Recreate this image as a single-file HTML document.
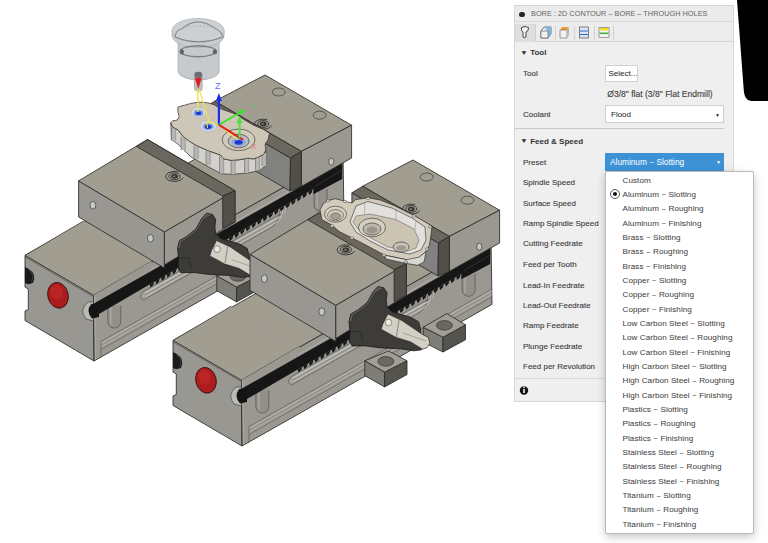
<!DOCTYPE html>
<html><head><meta charset="utf-8"><style>
*{margin:0;padding:0;box-sizing:border-box}
html,body{width:768px;height:543px;overflow:hidden;background:#fff;font-family:"Liberation Sans",sans-serif}
.abs{position:absolute}
.panel{position:absolute;left:514px;top:5px;width:220px;height:397px;background:#efefef;border:1px solid #d6d6d6}
.hdr{position:absolute;left:0;top:0;width:218px;height:16px;background:#ebebeb;border-bottom:1px solid #d9d9d9}
.dot{position:absolute;left:4px;top:6px;width:6px;height:5px;border-radius:3px;background:#222}
.ttl{position:absolute;left:16px;top:3.2px;font-size:7.35px;color:#666;white-space:nowrap;letter-spacing:0}
.tabs{position:absolute;left:0;top:16px;width:218px;height:20px;background:#ececec;border-bottom:1px solid #d4d4d4}
.tab.tsel{position:absolute;left:0;top:2px;width:20.5px;height:18px;background:#dedede;border-right:1px solid #d0d0d0}
.tsep{position:absolute;top:4px;width:1px;height:14px;background:#d2d2d2}
.sechdr{font-size:8px;font-weight:bold;color:#333;white-space:nowrap}
.tri{font-size:8px;position:relative;top:0px;display:inline-block;transform:scaleY(0.8)}
.lbl{font-size:8px;color:#404040;white-space:nowrap;-webkit-text-stroke:0.12px #404040}
.btn{background:#fff;border:1px solid #d2d2d2;font-size:8px;color:#222;padding:3px 0 0 2.5px;white-space:nowrap}
.sel{background:#fff;border:1px solid #d0d0d0;font-size:8px;color:#222;padding:3.6px 0 0 5px;white-space:nowrap}
.sel .arr,.bsel .arr{position:absolute;right:3px;top:6px;font-size:5px}
.sep{height:1.5px;background:#c8c8c8}
.sep2{height:1px;background:#d8d8d8}
.bsel{background:#3d92d6;font-size:8.3px;color:#fff;padding:4px 0 0 5px;white-space:nowrap}
.bsel .arr{color:#fff}
.bsel .d{font-size:6.8px;position:relative;top:-0.6px;margin:0 0.6px}
.menu{background:#fff;border:1px solid #b8b8b8;border-radius:2px;box-shadow:0 3px 8px rgba(0,0,0,0.22)}
.mi{font-size:8.1px;color:#444;white-space:nowrap;-webkit-text-stroke:0.05px #444;letter-spacing:0.06px}
.mi .d{font-size:6.6px;position:relative;top:-0.6px;margin:0 0.6px}
.radio{width:10px;height:10px;border-radius:5px;border:1.2px solid #555;background:#fff}
.radio:after{content:"";position:absolute;left:1.6px;top:1.6px;width:4.4px;height:4.4px;border-radius:3px;background:#111}
.blk{position:absolute}
</style></head>
<body>
<svg class="abs" style="left:0;top:0" width="768" height="543" viewBox="0 0 768 543">
<polygon points="25.0,255.4 275.0,113.9 343.0,153.8 93.0,295.3" fill="#a29d91" stroke="#2a2a28" stroke-width="0.85" stroke-linejoin="round" />
<polygon points="93.0,295.3 343.0,153.8 344.0,219.4 94.0,361.0" fill="#9a9891" stroke="#2a2a28" stroke-width="0.85" stroke-linejoin="round" />
<line x1="93.0" y1="302.0" x2="343.0" y2="160.5" stroke="#c0beb8" stroke-width="0.6"/>
<line x1="101.0" y1="341.5" x2="344.1" y2="203.9" stroke="#5e5c58" stroke-width="0.6"/>
<line x1="101.0" y1="343.5" x2="344.1" y2="205.9" stroke="#c4c2bc" stroke-width="0.8"/>
<line x1="101.0" y1="345.3" x2="344.1" y2="207.7" stroke="#8a8883" stroke-width="0.5"/>
<line x1="101.0" y1="347.0" x2="344.1" y2="209.4" stroke="#bdbbb5" stroke-width="0.7"/>
<line x1="101.0" y1="349.5" x2="344.1" y2="211.9" stroke="#5e5c58" stroke-width="0.6"/>
<line x1="101.0" y1="341.5" x2="101.0" y2="357.5" stroke="#555" stroke-width="0.6"/>
<path d="M143.5,291.4 L275.8,216.6 Q289.8,212.6 290.8,196.6 L279.8,200.7 Q281.8,218.7 272.8,226.7 L143.5,299.9 Q137.5,297.9 143.5,291.4 Z" fill="#a4a29c" stroke="#4a4845" stroke-width="0.6"/>
<path d="M145.2,292.9 L274.9,219.5 Q287.4,215.5 287.6,200.3" fill="none" stroke="#d4d2cc" stroke-width="0.9"/>
<path d="M145.2,294.9 L274.2,221.9 Q285.5,217.9 285.1,203.3" fill="none" stroke="#77756f" stroke-width="0.5"/>
<path d="M145.2,296.7 L273.6,224.1 Q283.8,220.1 282.9,206.0" fill="none" stroke="#cac8c2" stroke-width="0.8"/>
<path d="M107.8,305.6 v16 a6.5,6.5 0 0 0 13,0 v-16" fill="#92908b" stroke="#4a4845" stroke-width="0.6"/>
<line x1="110.8" y1="306.6" x2="110.8" y2="324.6" stroke="#c6c4be" stroke-width="0.7"/>
<path d="M314.1,188.9 v16 a6.5,6.5 0 0 0 13,0 v-16" fill="#92908b" stroke="#4a4845" stroke-width="0.6"/>
<line x1="317.1" y1="189.9" x2="317.1" y2="207.9" stroke="#c6c4be" stroke-width="0.7"/>
<polygon points="93.0,304.0 342.2,163.0 342.2,172.0 93.0,317.5" fill="#161616" />
<polygon points="149.6,284.4 150.6,287.6 153.2,285.1 154.2,281.9" fill="#161616" />
<polygon points="155.3,281.1 156.3,284.3 158.8,281.8 159.8,278.6" fill="#161616" />
<polygon points="161.0,277.8 162.0,281.0 164.5,278.4 165.5,275.2" fill="#161616" />
<polygon points="166.6,274.5 167.6,277.7 170.1,275.1 171.1,271.9" fill="#161616" />
<polygon points="172.3,271.2 173.3,274.4 175.8,271.8 176.8,268.6" fill="#161616" />
<polygon points="177.9,267.9 178.9,271.1 181.5,268.5 182.5,265.3" fill="#161616" />
<polygon points="183.6,264.6 184.6,267.8 187.1,265.2 188.1,262.0" fill="#161616" />
<polygon points="189.3,261.3 190.3,264.5 192.8,261.9 193.8,258.7" fill="#161616" />
<polygon points="194.9,258.0 195.9,261.2 198.5,258.6 199.5,255.4" fill="#161616" />
<polygon points="200.6,254.7 201.6,257.9 204.1,255.3 205.1,252.1" fill="#161616" />
<polygon points="206.3,251.3 207.3,254.5 209.8,252.0 210.8,248.8" fill="#161616" />
<polygon points="211.9,248.0 212.9,251.2 215.4,248.7 216.4,245.5" fill="#161616" />
<polygon points="217.6,244.7 218.6,247.9 221.1,245.4 222.1,242.2" fill="#161616" />
<polygon points="223.2,241.4 224.2,244.6 226.8,242.1 227.8,238.9" fill="#161616" />
<polygon points="228.9,238.1 229.9,241.3 232.4,238.8 233.4,235.6" fill="#161616" />
<polygon points="234.6,234.8 235.6,238.0 238.1,235.5 239.1,232.3" fill="#161616" />
<polygon points="240.2,231.5 241.2,234.7 243.8,232.1 244.8,228.9" fill="#161616" />
<polygon points="245.9,228.2 246.9,231.4 249.4,228.8 250.4,225.6" fill="#161616" />
<polygon points="251.6,224.9 252.6,228.1 255.1,225.5 256.1,222.3" fill="#161616" />
<polygon points="257.2,221.6 258.2,224.8 260.7,222.2 261.7,219.0" fill="#161616" />
<polygon points="262.9,218.3 263.9,221.5 266.4,218.9 267.4,215.7" fill="#161616" />
<polygon points="268.5,215.0 269.5,218.2 272.1,215.6 273.1,212.4" fill="#161616" />
<polygon points="274.2,211.7 275.2,214.9 277.7,212.3 278.7,209.1" fill="#161616" />
<polygon points="279.9,208.4 280.9,211.6 283.4,209.0 284.4,205.8" fill="#161616" />
<polygon points="285.5,205.0 286.5,208.2 289.1,205.7 290.1,202.5" fill="#161616" />
<polygon points="291.2,201.7 292.2,204.9 294.7,202.4 295.7,199.2" fill="#161616" />
<polygon points="296.9,198.4 297.9,201.6 300.4,199.1 301.4,195.9" fill="#161616" />
<polygon points="302.5,195.1 303.5,198.3 306.1,195.8 307.1,192.6" fill="#161616" />
<polygon points="308.2,191.8 309.2,195.0 311.7,192.5 312.7,189.3" fill="#161616" />
<polygon points="313.9,188.5 314.9,191.7 317.4,189.1 318.4,185.9" fill="#161616" />
<polygon points="313.4,179.2 342.2,163.0 342.2,179.0 313.4,194.2" fill="#161616" />
<line x1="315.4" y1="186.2" x2="342.2" y2="170.0" stroke="#3a3a38" stroke-width="0.8"/>
<polygon points="214.7,101.2 265.0,75.0 351.6,125.2 301.3,151.4" fill="#a29d91" stroke="#2a2a28" stroke-width="0.85" stroke-linejoin="round" />
<polygon points="301.3,151.4 351.6,125.2 351.6,158.0 301.3,186.4" fill="#9a9891" stroke="#2a2a28" stroke-width="0.85" stroke-linejoin="round" />
<polygon points="203.9,107.8 290.5,158.0 290.0,191.0 203.9,141.0" fill="#81827f" stroke="#2a2a28" stroke-width="0.85" stroke-linejoin="round" />
<polygon points="214.7,101.2 301.3,151.4 290.5,158.0 203.9,107.8" fill="#6b675e" stroke="#2a2a28" stroke-width="0.85" stroke-linejoin="round" />
<polygon points="290.5,158.0 301.3,151.4 301.3,186.4 290.0,191.0" fill="#524f49" stroke="#2a2a28" stroke-width="0.85" stroke-linejoin="round" />
<ellipse cx="278.7" cy="92.0" rx="6.5" ry="4" fill="none" stroke="#3a3a38" stroke-width="0.7" />
<ellipse cx="319.6" cy="115.2" rx="6.5" ry="4" fill="none" stroke="#3a3a38" stroke-width="0.7" />
<ellipse cx="331.3" cy="161.7" rx="2.6" ry="3.6" fill="#c8c6c0" stroke="#3a3a38" stroke-width="0.7" />
<polygon points="275.2,242.2 295.0,252.2 295.0,267.0 275.2,257.0" fill="#7f7d78" stroke="#2a2a28" stroke-width="0.85" stroke-linejoin="round" />
<polygon points="295.0,252.2 317.5,239.8 317.5,254.7 295.0,267.0" fill="#55534e" stroke="#2a2a28" stroke-width="0.85" stroke-linejoin="round" />
<polygon points="275.2,242.2 298.8,228.6 317.5,239.8 295.0,252.2" fill="#a29e94" stroke="#2a2a28" stroke-width="0.85" stroke-linejoin="round" />
<ellipse cx="296.4" cy="240.4" rx="8" ry="4.8" fill="#6a6862" stroke="#2a2a28" stroke-width="0.6" />
<polygon points="78.6,180.9 164.4,231.9 164.4,268.0 78.6,217.0" fill="#989792" stroke="#2a2a28" stroke-width="0.85" stroke-linejoin="round" />
<polygon points="164.4,231.9 235.0,190.7 235.0,222.0 164.4,265.0" fill="#9a9891" stroke="#2a2a28" stroke-width="0.85" stroke-linejoin="round" />
<polygon points="78.6,180.9 147.5,139.5 235.0,190.7 164.4,231.9" fill="#a29d91" stroke="#2a2a28" stroke-width="0.85" stroke-linejoin="round" />
<polygon points="136.5,146.5 147.5,139.5 235.0,190.7 222.7,196.2" fill="#6b675e" stroke="#2a2a28" stroke-width="0.85" stroke-linejoin="round" />
<polygon points="222.7,196.2 235.0,190.7 235.0,221.7 222.7,228.3" fill="#524f49" stroke="#2a2a28" stroke-width="0.85" stroke-linejoin="round" />
<ellipse cx="92.9" cy="205.2" rx="3" ry="3.8" fill="#c8c6c0" stroke="#3a3a38" stroke-width="0.7" />
<ellipse cx="150.4" cy="238.3" rx="3" ry="3.8" fill="#c8c6c0" stroke="#3a3a38" stroke-width="0.7" />
<path d="M183.0,177.8 A8.8,5 0 1 1 178.5,172.0" fill="none" stroke="#2e2e2c" stroke-width="0.9"/>
<ellipse cx="174.5" cy="176.3" rx="5.6" ry="3.4" fill="none" stroke="#2a2a28" stroke-width="0.9" />
<ellipse cx="174.5" cy="176.3" rx="3.2" ry="2.0" fill="#3a3936" stroke="#222" stroke-width="0.6" />
<ellipse cx="174.0" cy="176.3" rx="1.4" ry="0.9" fill="#777" />
<path d="M271.7,125.5 A8.8,5 0 1 1 267.2,119.7" fill="none" stroke="#2e2e2c" stroke-width="0.9"/>
<ellipse cx="263.2" cy="124.0" rx="5.6" ry="3.4" fill="none" stroke="#2a2a28" stroke-width="0.9" />
<ellipse cx="263.2" cy="124.0" rx="3.2" ry="2.0" fill="#3a3936" stroke="#222" stroke-width="0.6" />
<ellipse cx="262.7" cy="124.0" rx="1.4" ry="0.9" fill="#777" />
<polygon points="170.8,122.7 172.7,127.2 177.9,129.8 183.0,136.3 189.5,141.4 197.2,145.9 207.5,150.4 220.4,155.0 223.8,158.9 231.2,160.4 240.0,159.7 247.4,158.2 253.3,158.9 257.7,157.5 263.6,154.5 265.8,150.1 265.8,164.8 260.7,170.0 248.9,172.9 231.2,174.4 220.9,173.7 190.8,156.9 177.9,144.0 171.4,139.5" fill="#d3d1cb" stroke="#2a2a28" stroke-width="0.7" stroke-linejoin="round" />
<rect x="171.5" y="128.0" width="4.2" height="12.5" fill="#b9b7b1"/>
<line x1="171.5" y1="128.0" x2="171.5" y2="140.5" stroke="#555" stroke-width="0.5"/>
<line x1="175.7" y1="128.0" x2="175.7" y2="140.5" stroke="#777" stroke-width="0.5"/>
<rect x="181.0" y="136.5" width="4.2" height="13.5" fill="#b9b7b1"/>
<line x1="181.0" y1="136.5" x2="181.0" y2="150.0" stroke="#555" stroke-width="0.5"/>
<line x1="185.2" y1="136.5" x2="185.2" y2="150.0" stroke="#777" stroke-width="0.5"/>
<rect x="194.0" y="145.5" width="4.2" height="13.5" fill="#b9b7b1"/>
<line x1="194.0" y1="145.5" x2="194.0" y2="159.0" stroke="#555" stroke-width="0.5"/>
<line x1="198.2" y1="145.5" x2="198.2" y2="159.0" stroke="#777" stroke-width="0.5"/>
<rect x="206.0" y="150.5" width="4.2" height="14.5" fill="#b9b7b1"/>
<line x1="206.0" y1="150.5" x2="206.0" y2="165.0" stroke="#555" stroke-width="0.5"/>
<line x1="210.2" y1="150.5" x2="210.2" y2="165.0" stroke="#777" stroke-width="0.5"/>
<rect x="219.5" y="156.0" width="4.2" height="17.5" fill="#b9b7b1"/>
<line x1="219.5" y1="156.0" x2="219.5" y2="173.5" stroke="#555" stroke-width="0.5"/>
<line x1="223.7" y1="156.0" x2="223.7" y2="173.5" stroke="#777" stroke-width="0.5"/>
<rect x="231.0" y="160.2" width="4.2" height="14.0" fill="#b9b7b1"/>
<line x1="231.0" y1="160.2" x2="231.0" y2="174.2" stroke="#555" stroke-width="0.5"/>
<line x1="235.2" y1="160.2" x2="235.2" y2="174.2" stroke="#777" stroke-width="0.5"/>
<rect x="244.5" y="158.3" width="4.2" height="14.7" fill="#b9b7b1"/>
<line x1="244.5" y1="158.3" x2="244.5" y2="173.0" stroke="#555" stroke-width="0.5"/>
<line x1="248.7" y1="158.3" x2="248.7" y2="173.0" stroke="#777" stroke-width="0.5"/>
<rect x="255.5" y="157.5" width="4.2" height="13.0" fill="#b9b7b1"/>
<line x1="255.5" y1="157.5" x2="255.5" y2="170.5" stroke="#555" stroke-width="0.5"/>
<line x1="259.7" y1="157.5" x2="259.7" y2="170.5" stroke="#777" stroke-width="0.5"/>
<rect x="262.0" y="153.0" width="4.2" height="13.0" fill="#b9b7b1"/>
<line x1="262.0" y1="153.0" x2="262.0" y2="166.0" stroke="#555" stroke-width="0.5"/>
<line x1="266.2" y1="153.0" x2="266.2" y2="166.0" stroke="#777" stroke-width="0.5"/>
<polygon points="170.8,122.7 172.7,120.8 177.2,120.1 179.2,116.9 177.9,111.8 177.9,107.2 181.1,106.0 184.3,105.3 190.8,103.4 198.5,102.1 207.5,102.7 214.0,104.7 220.9,108.8 237.1,114.7 244.5,119.9 253.3,125.0 263.6,129.5 269.5,133.2 268.0,139.8 265.1,144.2 265.8,150.1 263.6,154.5 257.7,157.5 253.3,158.9 247.4,158.2 240.0,159.7 231.2,160.4 223.8,158.9 220.4,155.0 207.5,150.4 197.2,145.9 189.5,141.4 183.0,136.3 177.9,129.8 172.7,127.2" fill="#cec7b8" stroke="#2a2a28" stroke-width="0.7" stroke-linejoin="round" />
<ellipse cx="198.5" cy="112.4" rx="7.4" ry="5.3" fill="#d4dbe4" stroke="#b0b8c4" stroke-width="0.8" />
<ellipse cx="198.5" cy="113.0" rx="4.8" ry="3.2" fill="#7a9ad8" />
<ellipse cx="198.5" cy="113.3" rx="2.8" ry="1.8" fill="#1838d0" />
<ellipse cx="208.2" cy="126.0" rx="8.3" ry="5.8" fill="#d4dbe4" stroke="#b0b8c4" stroke-width="0.8" />
<ellipse cx="208.2" cy="126.5" rx="5.4" ry="3.6" fill="#7a9ad8" />
<ellipse cx="208.2" cy="126.8" rx="3.2" ry="2.0" fill="#1838d0" />
<ellipse cx="238.6" cy="139.8" rx="16.4" ry="10.8" fill="#d2ccbd" stroke="#2a2a28" stroke-width="0.6" />
<ellipse cx="238.6" cy="141.0" rx="10.5" ry="6.8" fill="#b8bcc2" stroke="#2a2a28" stroke-width="0.6" />
<ellipse cx="238.6" cy="142.0" rx="7" ry="4.2" fill="#90a8d8" />
<ellipse cx="238.6" cy="142.3" rx="4" ry="2.4" fill="#1838d0" />
<polygon points="25.0,255.4 83.2,221.2 151.7,261.1 93.5,295.3" fill="#a29d91" />
<line x1="25.0" y1="255.4" x2="83.2" y2="221.2" stroke="#2a2a28" stroke-width="0.7"/>
<line x1="93.5" y1="295.3" x2="151.7" y2="261.1" stroke="#2a2a28" stroke-width="0.7"/>
<line x1="26.0" y1="257.4" x2="93.5" y2="297.3" stroke="#c8c6c0" stroke-width="0.6"/>
<polygon points="25.0,255.4 93.5,295.3 94.0,361.0 25.0,320.5 25.0,311.0 28.3,309.5 28.3,289.0 25.0,287.0 25.0,267.0" fill="#989792" stroke="#2a2a28" stroke-width="0.85" stroke-linejoin="round" />
<line x1="25.0" y1="256.9" x2="93.5" y2="296.8" stroke="#3a3a38" stroke-width="0.5"/>
<polygon points="93.5,295.3 151.7,261.1 151.7,269.1 93.5,303.3" fill="#9a9891" />
<line x1="93.5" y1="295.3" x2="94.0" y2="361.0" stroke="#2a2a28" stroke-width="0.7"/>
<line x1="94.7" y1="296.3" x2="95.2" y2="360.0" stroke="#c4c2bc" stroke-width="0.6"/>
<ellipse cx="58.0" cy="295.3" rx="10.2" ry="13.0" fill="#ad1c1c" stroke="#2a0c0c" stroke-width="0.8" transform="rotate(-14 58.0 295.3)"/>
<ellipse cx="56.5" cy="292.0" rx="6" ry="7.5" fill="#bb2424" transform="rotate(-14 56.5 292.0)"/>
<path d="M25,267 L28.3,268.8 Q37,274 33,283 L28.3,284.3 L25,283 Z" fill="#1a1a1a"/>
<path d="M29,270 Q35,275 31.5,282" fill="none" stroke="#555" stroke-width="0.6"/>
<path d="M93.5,302 L88,302 Q78.5,310 86,319 L93.5,321 Z" fill="#bcbab4" stroke="#333" stroke-width="0.6"/>
<path d="M99,302 L91,304.2 Q85.5,311 92,318.6 L99,317 Z" fill="#141414"/>
<polygon points="216.8,275.8 236.6,287.0 236.6,301.9 216.8,290.7" fill="#7f7d78" stroke="#2a2a28" stroke-width="0.85" stroke-linejoin="round" />
<polygon points="236.6,287.0 259.0,275.8 259.0,289.5 236.6,301.9" fill="#55534e" stroke="#2a2a28" stroke-width="0.85" stroke-linejoin="round" />
<polygon points="216.8,275.8 240.4,265.9 259.0,275.8 236.6,287.0" fill="#a29e94" stroke="#2a2a28" stroke-width="0.85" stroke-linejoin="round" />
<ellipse cx="237.9" cy="276.4" rx="8" ry="4.8" fill="#6a6862" stroke="#2a2a28" stroke-width="0.6" />
<polygon points="206.6,213.2 212.4,214.5 215.7,219.3 214.9,227.1 215.7,233.8 221.1,238.7 238.5,243.5 247.2,248.4 249.1,255.1 250.1,276.4 242.4,277.4 228.8,275.4 209.5,274.5 194.0,272.5 180.6,272.6 178.1,266.6 178.5,258.0 177.6,248.4 179.5,240.6 186.3,236.8 196.0,229.0 201.8,218.4" fill="#3d3c39" stroke="#1a1a1a" stroke-width="0.8" stroke-linejoin="round" />
<polygon points="201.8,218.4 206.6,213.2 212.4,214.5 208.6,216.6 203.6,219.6 197.6,230.1 187.6,238.1 181.6,242.1 180.1,248.6 177.6,248.4 179.5,240.6 186.3,236.8 196.0,229.0" fill="#5b5a56" stroke="#222" stroke-width="0.5" stroke-linejoin="round" />
<polygon points="211.3,250.8 216.5,240.5 230.5,247.1 251.1,261.1 257.0,264.0 258.4,269.9 255.5,274.3 251.1,275.8 239.3,268.5 224.6,264.0 209.8,255.9" fill="#d3cfc4" stroke="#2a2a28" stroke-width="0.7" stroke-linejoin="round" />
<line x1="227.6" y1="246.6" x2="225.1" y2="263.1" stroke="#555" stroke-width="0.6"/>
<line x1="178.5" y1="258.0" x2="189.2" y2="258.0" stroke="#222" stroke-width="0.6"/>
<line x1="189.2" y1="258.0" x2="191.1" y2="268.1" stroke="#222" stroke-width="0.6"/>
<ellipse cx="217.1" cy="249.1" rx="3.2" ry="3.4" fill="#eeeae0" stroke="#555" stroke-width="0.6" />
<line x1="231.6" y1="259.6" x2="254.6" y2="267.6" stroke="#9a968c" stroke-width="0.8"/>
<g>
<path d="M178.1,40 L178.1,71 A20.5,9 0 0 0 219.1,71 L219.1,40 Z" fill="#c7cacd" stroke="#a6abb0" stroke-width="0.8"/>
<path d="M172.1,30.5 L172.1,35.5 A26,12 0 0 0 224.1,35.5 L224.1,30.5 Z" fill="#c9ccd0" stroke="#a9aeb3" stroke-width="0.8"/>
<ellipse cx="198.1" cy="30.5" rx="26" ry="12" fill="#ccd0d3" stroke="#b0b5ba" stroke-width="0.8" />
<path d="M174.9,37.1 Q176,30 181.8,28.8 Q190,21.9 198,21.9 Q206,21.9 215.8,28.8 Q221,31 223.2,37.1" fill="none" stroke="#8a8f94" stroke-width="1.1"/>
<path d="M182,27.5 Q198,24.5 214,27.5" fill="none" stroke="#9a9fa4" stroke-width="0.6" stroke-dasharray="2,1.5"/>
<path d="M174.9,37.1 Q198,46.5 223.2,37.1" fill="none" stroke="#80858a" stroke-width="1.1"/>
<ellipse cx="198.1" cy="51.3" rx="17.9" ry="5.5" fill="none" stroke="#7b8085" stroke-width="1.4" />
<ellipse cx="181.8" cy="51.8" rx="2.2" ry="2.6" fill="#5f656b" />
<ellipse cx="214.9" cy="51.8" rx="2.2" ry="2.6" fill="#5f656b" />
</g>
<rect x="194.4" y="72" width="7.8" height="19" rx="3" fill="#bfc2c5" stroke="#90949a" stroke-width="0.6"/>
<rect x="194.6" y="72" width="7.4" height="6" rx="2" fill="#6c7074"/>
<polygon points="194.8,78.0 201.8,78.0 198.3,89.0" fill="#e02020" />
<polyline points="197.6,89 198,112" fill="none" stroke="#f2e43a" stroke-width="1.3"/>
<polyline points="199,89 210,124" fill="none" stroke="#f2e43a" stroke-width="1.1"/>
<polyline points="207,121 207.5,128" fill="none" stroke="#f2e43a" stroke-width="1.1"/>
<polyline points="210,122 219,125 238,140" fill="none" stroke="#f2e43a" stroke-width="1.1"/>
<line x1="218.9" y1="124.8" x2="218.9" y2="99.0" stroke="#1a2cf0" stroke-width="2.2"/>
<polygon points="215.9,101.0 221.9,101.0 218.9,93.0" fill="#1a2cf0" />
<line x1="218.9" y1="124.8" x2="241.0" y2="112.0" stroke="#40e030" stroke-width="2"/>
<polygon points="238.0,110.0 246.0,110.0 241.0,115.0" fill="#40e030" />
<line x1="218.9" y1="124.8" x2="242.9" y2="139.7" stroke="#e02020" stroke-width="2"/>
<line x1="239.6" y1="138.0" x2="239.6" y2="122.0" stroke="#50e040" stroke-width="2"/>
<polygon points="236.5,123.0 242.7,123.0 239.6,116.0" fill="#50e040" />
<text x="215" y="89" font-family="Liberation Sans" font-size="9" fill="#6070f0">Z</text>
<text x="250" y="109" font-family="Liberation Sans" font-size="8" fill="#60c050">Y</text>
<text x="251" y="149" font-family="Liberation Sans" font-size="8" fill="#e07070">X</text>
<polygon points="173.0,340.4 423.0,198.9 491.0,238.8 241.0,380.3" fill="#a29d91" stroke="#2a2a28" stroke-width="0.85" stroke-linejoin="round" />
<polygon points="241.0,380.3 491.0,238.8 492.0,304.4 242.0,446.0" fill="#9a9891" stroke="#2a2a28" stroke-width="0.85" stroke-linejoin="round" />
<line x1="241.0" y1="387.0" x2="491.0" y2="245.5" stroke="#c0beb8" stroke-width="0.6"/>
<line x1="249.0" y1="426.5" x2="492.1" y2="288.9" stroke="#5e5c58" stroke-width="0.6"/>
<line x1="249.0" y1="428.5" x2="492.1" y2="290.9" stroke="#c4c2bc" stroke-width="0.8"/>
<line x1="249.0" y1="430.3" x2="492.1" y2="292.7" stroke="#8a8883" stroke-width="0.5"/>
<line x1="249.0" y1="432.0" x2="492.1" y2="294.4" stroke="#bdbbb5" stroke-width="0.7"/>
<line x1="249.0" y1="434.5" x2="492.1" y2="296.9" stroke="#5e5c58" stroke-width="0.6"/>
<line x1="249.0" y1="426.5" x2="249.0" y2="442.5" stroke="#555" stroke-width="0.6"/>
<path d="M291.5,376.4 L423.8,301.6 Q437.8,297.6 438.8,281.6 L427.8,285.7 Q429.8,303.7 420.8,311.7 L291.5,384.9 Q285.5,382.9 291.5,376.4 Z" fill="#a4a29c" stroke="#4a4845" stroke-width="0.6"/>
<path d="M293.2,377.9 L422.9,304.5 Q435.4,300.5 435.6,285.3" fill="none" stroke="#d4d2cc" stroke-width="0.9"/>
<path d="M293.2,379.9 L422.2,306.9 Q433.5,302.9 433.1,288.3" fill="none" stroke="#77756f" stroke-width="0.5"/>
<path d="M293.2,381.7 L421.6,309.1 Q431.8,305.1 430.9,291.0" fill="none" stroke="#cac8c2" stroke-width="0.8"/>
<path d="M255.8,390.6 v16 a6.5,6.5 0 0 0 13,0 v-16" fill="#92908b" stroke="#4a4845" stroke-width="0.6"/>
<line x1="258.8" y1="391.6" x2="258.8" y2="409.6" stroke="#c6c4be" stroke-width="0.7"/>
<path d="M462.1,273.9 v16 a6.5,6.5 0 0 0 13,0 v-16" fill="#92908b" stroke="#4a4845" stroke-width="0.6"/>
<line x1="465.1" y1="274.9" x2="465.1" y2="292.9" stroke="#c6c4be" stroke-width="0.7"/>
<polygon points="241.0,389.0 490.2,248.0 490.2,257.0 241.0,402.5" fill="#161616" />
<polygon points="297.6,369.4 298.6,372.6 301.2,370.1 302.2,366.9" fill="#161616" />
<polygon points="303.3,366.1 304.3,369.3 306.8,366.8 307.8,363.6" fill="#161616" />
<polygon points="309.0,362.8 310.0,366.0 312.5,363.4 313.5,360.2" fill="#161616" />
<polygon points="314.6,359.5 315.6,362.7 318.1,360.1 319.1,356.9" fill="#161616" />
<polygon points="320.3,356.2 321.3,359.4 323.8,356.8 324.8,353.6" fill="#161616" />
<polygon points="325.9,352.9 326.9,356.1 329.5,353.5 330.5,350.3" fill="#161616" />
<polygon points="331.6,349.6 332.6,352.8 335.1,350.2 336.1,347.0" fill="#161616" />
<polygon points="337.3,346.3 338.3,349.5 340.8,346.9 341.8,343.7" fill="#161616" />
<polygon points="342.9,343.0 343.9,346.2 346.5,343.6 347.5,340.4" fill="#161616" />
<polygon points="348.6,339.7 349.6,342.9 352.1,340.3 353.1,337.1" fill="#161616" />
<polygon points="354.3,336.3 355.3,339.5 357.8,337.0 358.8,333.8" fill="#161616" />
<polygon points="359.9,333.0 360.9,336.2 363.4,333.7 364.4,330.5" fill="#161616" />
<polygon points="365.6,329.7 366.6,332.9 369.1,330.4 370.1,327.2" fill="#161616" />
<polygon points="371.2,326.4 372.2,329.6 374.8,327.1 375.8,323.9" fill="#161616" />
<polygon points="376.9,323.1 377.9,326.3 380.4,323.8 381.4,320.6" fill="#161616" />
<polygon points="382.6,319.8 383.6,323.0 386.1,320.5 387.1,317.3" fill="#161616" />
<polygon points="388.2,316.5 389.2,319.7 391.8,317.1 392.8,313.9" fill="#161616" />
<polygon points="393.9,313.2 394.9,316.4 397.4,313.8 398.4,310.6" fill="#161616" />
<polygon points="399.6,309.9 400.6,313.1 403.1,310.5 404.1,307.3" fill="#161616" />
<polygon points="405.2,306.6 406.2,309.8 408.7,307.2 409.7,304.0" fill="#161616" />
<polygon points="410.9,303.3 411.9,306.5 414.4,303.9 415.4,300.7" fill="#161616" />
<polygon points="416.5,300.0 417.5,303.2 420.1,300.6 421.1,297.4" fill="#161616" />
<polygon points="422.2,296.7 423.2,299.9 425.7,297.3 426.7,294.1" fill="#161616" />
<polygon points="427.9,293.4 428.9,296.6 431.4,294.0 432.4,290.8" fill="#161616" />
<polygon points="433.5,290.0 434.5,293.2 437.1,290.7 438.1,287.5" fill="#161616" />
<polygon points="439.2,286.7 440.2,289.9 442.7,287.4 443.7,284.2" fill="#161616" />
<polygon points="444.9,283.4 445.9,286.6 448.4,284.1 449.4,280.9" fill="#161616" />
<polygon points="450.5,280.1 451.5,283.3 454.1,280.8 455.1,277.6" fill="#161616" />
<polygon points="456.2,276.8 457.2,280.0 459.7,277.5 460.7,274.3" fill="#161616" />
<polygon points="461.9,273.5 462.9,276.7 465.4,274.1 466.4,270.9" fill="#161616" />
<polygon points="461.4,264.2 490.2,248.0 490.2,264.0 461.4,279.2" fill="#161616" />
<line x1="463.4" y1="271.2" x2="490.2" y2="255.0" stroke="#3a3a38" stroke-width="0.8"/>
<polygon points="362.7,186.2 413.0,160.0 499.6,210.2 449.3,236.4" fill="#a29d91" stroke="#2a2a28" stroke-width="0.85" stroke-linejoin="round" />
<polygon points="449.3,236.4 499.6,210.2 499.6,243.0 449.3,271.4" fill="#9a9891" stroke="#2a2a28" stroke-width="0.85" stroke-linejoin="round" />
<polygon points="351.9,192.8 438.5,243.0 438.0,276.0 351.9,226.0" fill="#81827f" stroke="#2a2a28" stroke-width="0.85" stroke-linejoin="round" />
<polygon points="362.7,186.2 449.3,236.4 438.5,243.0 351.9,192.8" fill="#6b675e" stroke="#2a2a28" stroke-width="0.85" stroke-linejoin="round" />
<polygon points="438.5,243.0 449.3,236.4 449.3,271.4 438.0,276.0" fill="#524f49" stroke="#2a2a28" stroke-width="0.85" stroke-linejoin="round" />
<ellipse cx="426.7" cy="177.0" rx="6.5" ry="4" fill="none" stroke="#3a3a38" stroke-width="0.7" />
<ellipse cx="467.6" cy="200.2" rx="6.5" ry="4" fill="none" stroke="#3a3a38" stroke-width="0.7" />
<ellipse cx="479.3" cy="246.7" rx="2.6" ry="3.6" fill="#c8c6c0" stroke="#3a3a38" stroke-width="0.7" />
<path d="M419.7,210.5 A8.8,5 0 1 1 415.2,204.7" fill="none" stroke="#2e2e2c" stroke-width="0.9"/>
<ellipse cx="411.2" cy="209.0" rx="5.6" ry="3.4" fill="none" stroke="#2a2a28" stroke-width="0.9" />
<ellipse cx="411.2" cy="209.0" rx="3.2" ry="2.0" fill="#3a3936" stroke="#222" stroke-width="0.6" />
<ellipse cx="410.7" cy="209.0" rx="1.4" ry="0.9" fill="#777" />
<polygon points="423.2,327.2 443.0,337.2 443.0,352.0 423.2,342.0" fill="#7f7d78" stroke="#2a2a28" stroke-width="0.85" stroke-linejoin="round" />
<polygon points="443.0,337.2 465.5,324.8 465.5,339.7 443.0,352.0" fill="#55534e" stroke="#2a2a28" stroke-width="0.85" stroke-linejoin="round" />
<polygon points="423.2,327.2 446.8,313.6 465.5,324.8 443.0,337.2" fill="#a29e94" stroke="#2a2a28" stroke-width="0.85" stroke-linejoin="round" />
<ellipse cx="444.4" cy="325.4" rx="8" ry="4.8" fill="#6a6862" stroke="#2a2a28" stroke-width="0.6" />
<polygon points="250.0,254.3 335.8,305.3 335.8,341.4 250.0,290.4" fill="#989792" stroke="#2a2a28" stroke-width="0.85" stroke-linejoin="round" />
<polygon points="335.8,305.3 406.4,264.1 406.4,295.4 335.8,338.4" fill="#9a9891" stroke="#2a2a28" stroke-width="0.85" stroke-linejoin="round" />
<polygon points="250.0,254.3 318.9,212.9 406.4,264.1 335.8,305.3" fill="#a29d91" stroke="#2a2a28" stroke-width="0.85" stroke-linejoin="round" />
<polygon points="307.9,219.9 318.9,212.9 406.4,264.1 394.1,269.6" fill="#6b675e" stroke="#2a2a28" stroke-width="0.85" stroke-linejoin="round" />
<polygon points="394.1,269.6 406.4,264.1 406.4,295.1 394.1,301.7" fill="#524f49" stroke="#2a2a28" stroke-width="0.85" stroke-linejoin="round" />
<ellipse cx="264.3" cy="278.6" rx="3" ry="3.8" fill="#c8c6c0" stroke="#3a3a38" stroke-width="0.7" />
<ellipse cx="321.8" cy="311.7" rx="3" ry="3.8" fill="#c8c6c0" stroke="#3a3a38" stroke-width="0.7" />
<path d="M354.4,251.2 A8.8,5 0 1 1 349.9,245.4" fill="none" stroke="#2e2e2c" stroke-width="0.9"/>
<ellipse cx="345.9" cy="249.7" rx="5.6" ry="3.4" fill="none" stroke="#2a2a28" stroke-width="0.9" />
<ellipse cx="345.9" cy="249.7" rx="3.2" ry="2.0" fill="#3a3936" stroke="#222" stroke-width="0.6" />
<ellipse cx="345.4" cy="249.7" rx="1.4" ry="0.9" fill="#777" />
<polygon points="320.0,209.6 323.7,203.2 328.2,200.5 335.5,198.7 345.5,201.4 352.0,203.0 355.6,199.6 368.3,197.8 380.0,200.0 395.0,206.0 415.0,216.0 432.1,226.0 431.0,235.0 429.4,245.2 426.0,251.5 419.4,257.0 417.5,265.2 406.6,263.4 406.6,259.7 384.7,255.2 375.0,250.0 362.0,243.0 351.9,237.9 339.2,231.5 331.9,225.1 321.8,219.6" fill="#d3ccbc" stroke="#2a2a28" stroke-width="0.7" stroke-linejoin="round" />
<polygon points="384.7,255.2 406.6,259.7 419.4,257.0 426.0,251.5 424.0,262.0 417.5,265.2 406.6,263.4 386.0,259.0" fill="#dad8d2" stroke="#2a2a28" stroke-width="0.6" stroke-linejoin="round" />
<polygon points="356.0,206.0 368.0,201.5 392.0,208.0 412.0,218.0 425.0,227.0 426.0,240.0 421.0,250.0 410.0,254.0 388.0,250.0 370.0,241.0 356.0,232.0 350.0,222.0" fill="#e2e0dc" stroke="#2a2a28" stroke-width="0.6" stroke-linejoin="round" />
<polygon points="356.0,216.0 370.0,214.0 395.7,219.5 414.0,229.0 419.0,240.0 416.0,248.0 408.0,251.0 388.0,247.0 371.0,238.0 358.0,229.0 353.0,222.0" fill="#cbc4b3" stroke="#555" stroke-width="0.5" stroke-linejoin="round" />
<line x1="364.7" y1="203.0" x2="364.7" y2="214.5" stroke="#888" stroke-width="0.5"/>
<line x1="396.0" y1="209.0" x2="396.0" y2="219.5" stroke="#888" stroke-width="0.5"/>
<line x1="416.0" y1="220.0" x2="415.0" y2="230.0" stroke="#888" stroke-width="0.5"/>
<ellipse cx="335.5" cy="214.2" rx="11" ry="8" fill="#d9d3c6" stroke="#2a2a28" stroke-width="0.6" />
<ellipse cx="335.5" cy="215.2" rx="8" ry="5.6" fill="#cfc9bb" stroke="#2a2a28" stroke-width="0.5" />
<ellipse cx="335.5" cy="216.3" rx="5" ry="3.2" fill="#a5a094" stroke="#444" stroke-width="0.5" />
<ellipse cx="372.0" cy="227.5" rx="13.5" ry="9.3" fill="#d6d0c2" stroke="#2a2a28" stroke-width="0.6" />
<ellipse cx="372.0" cy="229.0" rx="9" ry="6" fill="#bdb8ac" stroke="#2a2a28" stroke-width="0.6" />
<ellipse cx="372.0" cy="230.0" rx="5.5" ry="3.5" fill="#9a968c" />
<ellipse cx="401.1" cy="247.0" rx="8" ry="5" fill="#c9c4b8" stroke="#2a2a28" stroke-width="0.6" />
<ellipse cx="401.1" cy="248.0" rx="5" ry="2.8" fill="#a09b90" />
<ellipse cx="328.0" cy="201.0" rx="1.6" ry="1.2" fill="#f0eee8" stroke="#333" stroke-width="0.5" />
<ellipse cx="345.0" cy="201.5" rx="1.6" ry="1.2" fill="#f0eee8" stroke="#333" stroke-width="0.5" />
<ellipse cx="368.0" cy="198.5" rx="1.6" ry="1.2" fill="#f0eee8" stroke="#333" stroke-width="0.5" />
<ellipse cx="414.0" cy="216.0" rx="1.6" ry="1.2" fill="#f0eee8" stroke="#333" stroke-width="0.5" />
<ellipse cx="430.0" cy="227.0" rx="1.6" ry="1.2" fill="#f0eee8" stroke="#333" stroke-width="0.5" />
<ellipse cx="427.0" cy="249.0" rx="1.6" ry="1.2" fill="#f0eee8" stroke="#333" stroke-width="0.5" />
<ellipse cx="406.0" cy="262.0" rx="1.6" ry="1.2" fill="#f0eee8" stroke="#333" stroke-width="0.5" />
<ellipse cx="384.0" cy="255.0" rx="1.6" ry="1.2" fill="#f0eee8" stroke="#333" stroke-width="0.5" />
<ellipse cx="352.0" cy="238.0" rx="1.6" ry="1.2" fill="#f0eee8" stroke="#333" stroke-width="0.5" />
<ellipse cx="332.0" cy="226.0" rx="1.6" ry="1.2" fill="#f0eee8" stroke="#333" stroke-width="0.5" />
<polygon points="173.0,340.4 231.2,306.2 299.7,346.1 241.5,380.3" fill="#a29d91" />
<line x1="173.0" y1="340.4" x2="231.2" y2="306.2" stroke="#2a2a28" stroke-width="0.7"/>
<line x1="241.5" y1="380.3" x2="299.7" y2="346.1" stroke="#2a2a28" stroke-width="0.7"/>
<line x1="174.0" y1="342.4" x2="241.5" y2="382.3" stroke="#c8c6c0" stroke-width="0.6"/>
<polygon points="173.0,340.4 241.5,380.3 242.0,446.0 173.0,405.5 173.0,396.0 176.3,394.5 176.3,374.0 173.0,372.0 173.0,352.0" fill="#989792" stroke="#2a2a28" stroke-width="0.85" stroke-linejoin="round" />
<line x1="173.0" y1="341.9" x2="241.5" y2="381.8" stroke="#3a3a38" stroke-width="0.5"/>
<polygon points="241.5,380.3 299.7,346.1 299.7,354.1 241.5,388.3" fill="#9a9891" />
<line x1="241.5" y1="380.3" x2="242.0" y2="446.0" stroke="#2a2a28" stroke-width="0.7"/>
<line x1="242.7" y1="381.3" x2="243.2" y2="445.0" stroke="#c4c2bc" stroke-width="0.6"/>
<ellipse cx="206.0" cy="380.3" rx="10.2" ry="13.0" fill="#ad1c1c" stroke="#2a0c0c" stroke-width="0.8" transform="rotate(-14 206.0 380.3)"/>
<ellipse cx="204.5" cy="377.0" rx="6" ry="7.5" fill="#bb2424" transform="rotate(-14 204.5 377.0)"/>
<path d="M173,352 L176.3,353.8 Q185,359 181,368 L176.3,369.3 L173,368 Z" fill="#1a1a1a"/>
<path d="M177,355 Q183,360 179.5,367" fill="none" stroke="#555" stroke-width="0.6"/>
<path d="M241.5,387 L236,387 Q226.5,395 234,404 L241.5,406 Z" fill="#bcbab4" stroke="#333" stroke-width="0.6"/>
<path d="M247,387 L239,389.2 Q233.5,396 240,403.6 L247,402 Z" fill="#141414"/>
<polygon points="364.8,360.8 384.6,372.0 384.6,386.9 364.8,375.7" fill="#7f7d78" stroke="#2a2a28" stroke-width="0.85" stroke-linejoin="round" />
<polygon points="384.6,372.0 407.0,360.8 407.0,374.5 384.6,386.9" fill="#55534e" stroke="#2a2a28" stroke-width="0.85" stroke-linejoin="round" />
<polygon points="364.8,360.8 388.4,350.9 407.0,360.8 384.6,372.0" fill="#a29e94" stroke="#2a2a28" stroke-width="0.85" stroke-linejoin="round" />
<ellipse cx="385.9" cy="361.4" rx="8" ry="4.8" fill="#6a6862" stroke="#2a2a28" stroke-width="0.6" />
<polygon points="378.0,286.6 383.8,287.9 387.1,292.7 386.3,300.5 387.1,307.2 392.5,312.1 409.9,316.9 418.6,321.8 420.5,328.5 421.5,349.8 413.8,350.8 400.2,348.8 380.9,347.9 365.4,345.9 352.0,346.0 349.5,340.0 349.9,331.4 349.0,321.8 350.9,314.0 357.7,310.2 367.4,302.4 373.2,291.8" fill="#3d3c39" stroke="#1a1a1a" stroke-width="0.8" stroke-linejoin="round" />
<polygon points="373.2,291.8 378.0,286.6 383.8,287.9 380.0,290.0 375.0,293.0 369.0,303.5 359.0,311.5 353.0,315.5 351.5,322.0 349.0,321.8 350.9,314.0 357.7,310.2 367.4,302.4" fill="#5b5a56" stroke="#222" stroke-width="0.5" stroke-linejoin="round" />
<polygon points="382.7,324.2 387.9,313.9 401.9,320.5 422.5,334.5 428.4,337.4 429.8,343.3 426.9,347.7 422.5,349.2 410.7,341.9 396.0,337.4 381.2,329.3" fill="#d3cfc4" stroke="#2a2a28" stroke-width="0.7" stroke-linejoin="round" />
<line x1="399.0" y1="320.0" x2="396.5" y2="336.5" stroke="#555" stroke-width="0.6"/>
<line x1="349.9" y1="331.4" x2="360.6" y2="331.4" stroke="#222" stroke-width="0.6"/>
<line x1="360.6" y1="331.4" x2="362.5" y2="341.5" stroke="#222" stroke-width="0.6"/>
<ellipse cx="388.5" cy="322.5" rx="3.2" ry="3.4" fill="#eeeae0" stroke="#555" stroke-width="0.6" />
<line x1="403.0" y1="333.0" x2="426.0" y2="341.0" stroke="#9a968c" stroke-width="0.8"/>

<path d="M737,0 L768,0 L768,101 L752,101 Q744,101 743.6,88 Z" fill="#000"/>
</svg>
<div class="panel">
<div class="hdr"><span class="dot"></span><span class="ttl">BORE : 2D CONTOUR – BORE – THROUGH HOLES</span></div>
<div class="tabs"><div class="tab tsel"></div><div class="tsep" style="left:40px"></div><div class="tsep" style="left:59px"></div><div class="tsep" style="left:78.5px"></div><div class="tsep" style="left:98px"></div></div>
</div>
<svg class="abs" width="768" height="543" style="left:0;top:0">
<g>
<path d="M521.5,27.5 q3.5,-2 7,0 l-0.5,3 l-2,1.5 l0,5 q-1.5,1.5 -3,0 l0,-5 l-1.5,-1.5 z" fill="#f4f4f4" stroke="#333" stroke-width="0.9"/>
<path d="M541,31 l3,-4 h7 v7 l-3,4 h-7 z" fill="#e8eef4" stroke="#555" stroke-width="0.8"/>
<path d="M544,27 h7 v7 l-3,4 v-7 z" fill="#7ab8e0"/>
<path d="M541,31 h7 v7 h-7 z" fill="#f0f0f0" stroke="#666" stroke-width="0.7"/>
<path d="M560,30 l2,-3 h7 l-2,3 z" fill="#f09a30"/>
<path d="M560,30 h7 v8 h-7 z" fill="#f2f2f2" stroke="#777" stroke-width="0.7"/>
<path d="M567,30 l2,-3 v8 l-2,3 z" fill="#b8b8b8"/>
<rect x="579.5" y="27" width="9" height="11" fill="#dde4ec" stroke="#667" stroke-width="0.8"/>
<line x1="580" y1="31" x2="588" y2="31" stroke="#2a6ad0" stroke-width="1"/>
<line x1="580" y1="34.5" x2="588" y2="34.5" stroke="#2a6ad0" stroke-width="1"/>
<rect x="599" y="27.5" width="10" height="10" fill="#f4f4f4" stroke="#777" stroke-width="0.7"/>
<rect x="599.5" y="28" width="9" height="2.5" fill="#f2e020"/>
<rect x="599.5" y="32.5" width="9" height="1.6" fill="#40b040"/>
</g>
<circle cx="524" cy="390.5" r="4.2" fill="#111"/>
<rect x="523.3" y="389" width="1.5" height="4" fill="#fff"/>
<circle cx="524" cy="387.4" r="0.8" fill="#fff"/>
</svg>
<div class="abs sechdr" style="left:520px;top:48.3px"><span class="tri">▼</span> Tool</div>
<div class="abs lbl" style="left:523px;top:68.7px">Tool</div>
<div class="abs btn" style="left:605px;top:64.5px;width:33px;height:17px">Select...</div>
<div class="abs lbl" style="left:607.3px;top:89px;font-size:8.55px">Ø3/8" flat (3/8" Flat Endmill)</div>
<div class="abs sel" style="left:605px;top:105px;width:119px;height:18px"><span>Flood</span><span class="arr">▼</span></div>
<div class="abs lbl" style="left:523px;top:109.6px">Coolant</div>
<div class="abs sep" style="left:515px;top:127.5px;width:209px"></div>
<div class="abs sechdr" style="left:520px;top:137px"><span class="tri">▼</span> Feed &amp; Speed</div>
<div class="abs lbl" style="left:523px;top:157.6px">Preset</div>
<div class="abs lbl" style="left:523px;top:178.2px">Spindle Speed</div>
<div class="abs lbl" style="left:523px;top:198.5px">Surface Speed</div>
<div class="abs lbl" style="left:523px;top:219.1px">Ramp Spindle Speed</div>
<div class="abs lbl" style="left:523px;top:239.3px">Cutting Feedrate</div>
<div class="abs lbl" style="left:523px;top:259.9px">Feed per Tooth</div>
<div class="abs lbl" style="left:523px;top:280.6px">Lead-In Feedrate</div>
<div class="abs lbl" style="left:523px;top:300.8px">Lead-Out Feedrate</div>
<div class="abs lbl" style="left:523px;top:321.4px">Ramp Feedrate</div>
<div class="abs lbl" style="left:523px;top:341.7px">Plunge Feedrate</div>
<div class="abs lbl" style="left:523px;top:362.4px">Feed per Revolution</div>
<div class="abs sep2" style="left:514px;top:377.5px;width:220px"></div>
<div class="abs bsel" style="left:605px;top:153px;width:119px;height:17.5px"><span>Aluminum <span class="d">–</span> Slotting</span><span class="arr">▼</span></div>
<div class="abs menu" style="left:605px;top:171px;width:149px;height:362.5px"></div>
<div class="abs mi" style="left:622.5px;top:175.6px">Custom</div>
<div class="abs mi" style="left:622.5px;top:189.9px">Aluminum <span class="d">–</span> Slotting</div>
<div class="abs mi" style="left:622.5px;top:204.3px">Aluminum <span class="d">–</span> Roughing</div>
<div class="abs mi" style="left:622.5px;top:218.6px">Aluminum <span class="d">–</span> Finishing</div>
<div class="abs mi" style="left:622.5px;top:233.0px">Brass <span class="d">–</span> Slotting</div>
<div class="abs mi" style="left:622.5px;top:247.3px">Brass <span class="d">–</span> Roughing</div>
<div class="abs mi" style="left:622.5px;top:261.6px">Brass <span class="d">–</span> Finishing</div>
<div class="abs mi" style="left:622.5px;top:276.0px">Copper <span class="d">–</span> Slotting</div>
<div class="abs mi" style="left:622.5px;top:290.3px">Copper <span class="d">–</span> Roughing</div>
<div class="abs mi" style="left:622.5px;top:304.7px">Copper <span class="d">–</span> Finishing</div>
<div class="abs mi" style="left:622.5px;top:319.0px">Low Carbon Steel <span class="d">–</span> Slotting</div>
<div class="abs mi" style="left:622.5px;top:333.3px">Low Carbon Steel <span class="d">–</span> Roughing</div>
<div class="abs mi" style="left:622.5px;top:347.7px">Low Carbon Steel <span class="d">–</span> Finishing</div>
<div class="abs mi" style="left:622.5px;top:362.0px">High Carbon Steel <span class="d">–</span> Slotting</div>
<div class="abs mi" style="left:622.5px;top:376.4px">High Carbon Steel <span class="d">–</span> Roughing</div>
<div class="abs mi" style="left:622.5px;top:390.7px">High Carbon Steel <span class="d">–</span> Finishing</div>
<div class="abs mi" style="left:622.5px;top:405.0px">Plastics <span class="d">–</span> Slotting</div>
<div class="abs mi" style="left:622.5px;top:419.4px">Plastics <span class="d">–</span> Roughing</div>
<div class="abs mi" style="left:622.5px;top:433.7px">Plastics <span class="d">–</span> Finishing</div>
<div class="abs mi" style="left:622.5px;top:448.1px">Stainless Steel <span class="d">–</span> Slotting</div>
<div class="abs mi" style="left:622.5px;top:462.4px">Stainless Steel <span class="d">–</span> Roughing</div>
<div class="abs mi" style="left:622.5px;top:476.7px">Stainless Steel <span class="d">–</span> Finishing</div>
<div class="abs mi" style="left:622.5px;top:491.1px">Titanium <span class="d">–</span> Slotting</div>
<div class="abs mi" style="left:622.5px;top:505.4px">Titanium <span class="d">–</span> Roughing</div>
<div class="abs mi" style="left:622.5px;top:519.8px">Titanium <span class="d">–</span> Finishing</div>
<div class="abs radio" style="left:610.2px;top:189.2px"></div>

</body></html>
